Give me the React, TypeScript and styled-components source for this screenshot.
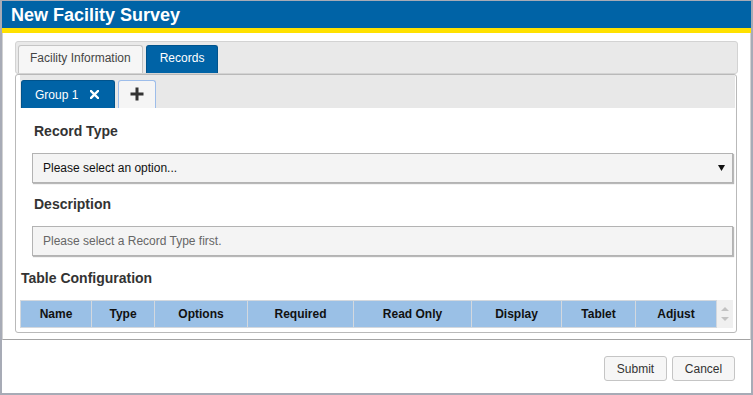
import React from 'react';
import styled, { createGlobalStyle } from 'styled-components';

const GlobalStyle = createGlobalStyle`
  html, body {
    margin: 0;
    padding: 0;
    background: #fff;
  }
  body {
    font-family: "Liberation Sans", Arial, sans-serif;
  }
  * {
    box-sizing: border-box;
  }
`;

const Window = styled.div`
  width: 753px;
  height: 395px;
  display: flex;
  flex-direction: column;
  background: #fff;
  border: 2px solid #a7abb6;
  border-top-width: 1px;
`;

const TitleBar = styled.div`
  height: 32px;
  padding: 1px 0 0 9px;
  line-height: 26px;
  font-size: 18px;
  font-weight: bold;
  color: #fff;
  background: #0063a6;
  border-bottom: 5px solid #ffe100;
`;

const Panel = styled.div`
  padding: 8px 12px 6px 12px;
  border-left: 1px solid #d2d2d2;
  border-right: 1px solid #d2d2d2;
  border-bottom: 1px solid #a4a4a4;
`;

const TabNav = styled.div`
  height: 33px;
  display: flex;
  align-items: flex-end;
  gap: 3px;
  padding: 3px 0 0 2px;
  background: #e9e9e9;
  border: 1px solid #d3d3d3;
  border-radius: 3px;
`;

const Tab = styled.div<{ $active?: boolean }>`
  height: 28px;
  padding: 0 ${p => (p.$active ? '13px' : '11px')};
  line-height: 25px;
  font-size: 12px;
  color: ${p => (p.$active ? '#fff' : '#454545')};
  background: ${p => (p.$active ? '#0063a6' : '#f6f6f6')};
  border: 1px solid ${p => (p.$active ? '#00538c' : '#c5c5c5')};
  border-bottom: none;
  border-radius: 3px 3px 0 0;
`;

const GroupBox = styled.div`
  margin-right: 1px;
  height: 259px;
  padding: 0 3px 4px 4px;
  border: 1px solid #b9b9b9;
  border-radius: 3px;
`;

const GroupNav = styled.div`
  height: 33px;
  margin-right: -2px;
  display: flex;
  align-items: flex-end;
  gap: 3px;
  padding: 5px 0 0 1px;
  background: #e8e8e8;
`;

const GroupTab = styled.div`
  height: 28px;
  display: flex;
  align-items: center;
  gap: 12px;
  padding: 0 15px 0 13px;
  font-size: 12px;
  color: #fff;
  background: #0063a6;
  border: 1px solid #00538c;
  border-bottom: none;
  border-radius: 3px 3px 0 0;
`;

const AddButton = styled.div`
  width: 38px;
  height: 28px;
  display: flex;
  align-items: center;
  justify-content: center;
  padding-bottom: 2px;
  background: #f5f5f5;
  border: 1px solid #9dbdea;
  border-bottom: none;
  border-radius: 3px 3px 0 0;
`;

const Form = styled.div`
  padding-left: 12px;
`;

const FieldLabel = styled.div<{ $first?: boolean }>`
  margin: ${p => (p.$first ? '15px' : '13px')} 0 14px 2px;
  line-height: 16px;
  font-size: 14px;
  font-weight: bold;
  color: #333;
`;

const Field = styled.div<{ $placeholder?: boolean }>`
  height: 30px;
  display: flex;
  align-items: center;
  justify-content: space-between;
  padding: 0 7px 0 10px;
  font-size: 12px;
  color: ${p => (p.$placeholder ? '#666' : '#111')};
  background: #f4f4f4;
  border: 1px solid #b3b3b3;
  box-shadow: 1px 1px 1px rgba(0, 0, 0, 0.28);
`;

const SectionTitle = styled.div`
  margin: 14px 0 14px 1px;
  line-height: 16px;
  font-size: 14px;
  font-weight: bold;
  color: #333;
`;

const Table = styled.div`
  display: flex;
`;

const HeaderRow = styled.div`
  display: grid;
  grid-template-columns: 71px 63px 93px 106px 118px 90px 74px 81px;
  height: 28px;
  border: 1px solid #d3d8de;
  border-right: none;
  background: #9ac0e6;
`;

const HeaderCell = styled.div`
  line-height: 26px;
  text-align: center;
  font-size: 12px;
  font-weight: bold;
  color: #111;
  border-right: 1px solid #d3d8de;
`;

const ScrollBar = styled.div`
  width: 17px;
  height: 28px;
  display: flex;
  flex-direction: column;
  align-items: center;
  justify-content: center;
  gap: 6px;
  background: #f0f0f0;
`;

const Footer = styled.div`
  flex: 1;
  display: flex;
  justify-content: flex-end;
  align-items: flex-start;
  gap: 5px;
  padding: 16px 16px 0 0;
`;

const Button = styled.button`
  width: 63px;
  height: 25px;
  padding: 0;
  font-family: inherit;
  font-size: 12px;
  color: #333;
  background: #f6f6f6;
  border: 1px solid #c5c5c5;
  border-radius: 3px;
`;

const columns = ['Name', 'Type', 'Options', 'Required', 'Read Only', 'Display', 'Tablet', 'Adjust'];

const App: React.FC = () => {
  return (
    <>
      <GlobalStyle />
      <Window>
        <TitleBar>New Facility Survey</TitleBar>
        <Panel>
          <TabNav>
            <Tab>Facility Information</Tab>
            <Tab $active>Records</Tab>
          </TabNav>
          <GroupBox>
            <GroupNav>
              <GroupTab>
                Group 1
                <svg width="9" height="9" viewBox="0 0 9 9">
                  <path d="M1 1 L8 8 M8 1 L1 8" stroke="#fff" strokeWidth="2.4" strokeLinecap="square" />
                </svg>
              </GroupTab>
              <AddButton>
                <svg width="14" height="14" viewBox="0 0 14 14">
                  <path d="M7 0.5 V13.5 M0.5 7 H13.5" stroke="#333" strokeWidth="3" />
                </svg>
              </AddButton>
            </GroupNav>
            <Form>
              <FieldLabel $first>Record Type</FieldLabel>
              <Field>
                Please select an option...
                <svg width="7" height="6" viewBox="0 0 7 6">
                  <path d="M0 0 H7 L3.5 6 Z" fill="#111" />
                </svg>
              </Field>
              <FieldLabel>Description</FieldLabel>
              <Field $placeholder>Please select a Record Type first.</Field>
            </Form>
            <SectionTitle>Table Configuration</SectionTitle>
            <Table>
              <HeaderRow>
                {columns.map(c => (
                  <HeaderCell key={c}>{c}</HeaderCell>
                ))}
              </HeaderRow>
              <ScrollBar>
                <svg width="8" height="4" viewBox="0 0 8 4">
                  <path d="M0 4 L4 0 L8 4 Z" fill="#c2c2c2" />
                </svg>
                <svg width="8" height="4" viewBox="0 0 8 4">
                  <path d="M0 0 L8 0 L4 4 Z" fill="#c2c2c2" />
                </svg>
              </ScrollBar>
            </Table>
          </GroupBox>
        </Panel>
        <Footer>
          <Button>Submit</Button>
          <Button>Cancel</Button>
        </Footer>
      </Window>
    </>
  );
};

export default App;
